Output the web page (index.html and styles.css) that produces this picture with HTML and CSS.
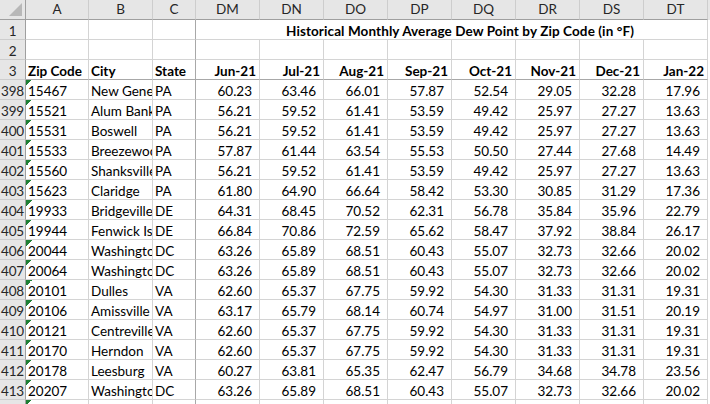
FILE: index.html
```html
<!DOCTYPE html>
<html>
<head>
<meta charset="utf-8">
<link rel="stylesheet" href="styles.css">
</head>
<body>
<div class="sheet">
  <div class="row colhdr">
    <div class="corner"><div class="tri"></div></div>
    <div class="ch">A</div><div class="ch">B</div><div class="ch">C</div>
    <div class="ch">DM</div><div class="ch">DN</div><div class="ch">DO</div><div class="ch">DP</div>
    <div class="ch">DQ</div><div class="ch">DR</div><div class="ch">DS</div><div class="ch">DT</div>
  </div>
  <div class="row">
    <div class="rn">1</div><div class="c"></div><div class="c"></div><div class="c fz"></div>
    <div class="c title">Historical Monthly Average Dew Point by Zip Code (in °F)</div>
  </div>
  <div class="row">
    <div class="rn">2</div><div class="c"></div><div class="c"></div><div class="c fz"></div>
    <div class="c"></div><div class="c"></div><div class="c"></div><div class="c"></div>
    <div class="c"></div><div class="c"></div><div class="c"></div><div class="c"></div>
  </div>
  <div class="row frozen">
    <div class="rn">3</div>
    <div class="c b">Zip Code</div><div class="c b">City</div><div class="c b fz">State</div>
    <div class="c b r">Jun-21</div><div class="c b r">Jul-21</div><div class="c b r">Aug-21</div><div class="c b r">Sep-21</div>
    <div class="c b r">Oct-21</div><div class="c b r">Nov-21</div><div class="c b r">Dec-21</div><div class="c b r">Jan-22</div>
  </div>
  <div class="row"><div class="rn">398</div><div class="c z">15467</div><div class="c">New Geneva</div><div class="c fz">PA</div><div class="c n">60.23</div><div class="c n">63.46</div><div class="c n">66.01</div><div class="c n">57.87</div><div class="c n">52.54</div><div class="c n">29.05</div><div class="c n">32.28</div><div class="c n">17.96</div></div>
  <div class="row"><div class="rn">399</div><div class="c z">15521</div><div class="c">Alum Bank</div><div class="c fz">PA</div><div class="c n">56.21</div><div class="c n">59.52</div><div class="c n">61.41</div><div class="c n">53.59</div><div class="c n">49.42</div><div class="c n">25.97</div><div class="c n">27.27</div><div class="c n">13.63</div></div>
  <div class="row"><div class="rn">400</div><div class="c z">15531</div><div class="c">Boswell</div><div class="c fz">PA</div><div class="c n">56.21</div><div class="c n">59.52</div><div class="c n">61.41</div><div class="c n">53.59</div><div class="c n">49.42</div><div class="c n">25.97</div><div class="c n">27.27</div><div class="c n">13.63</div></div>
  <div class="row"><div class="rn">401</div><div class="c z">15533</div><div class="c">Breezewood</div><div class="c fz">PA</div><div class="c n">57.87</div><div class="c n">61.44</div><div class="c n">63.54</div><div class="c n">55.53</div><div class="c n">50.50</div><div class="c n">27.44</div><div class="c n">27.68</div><div class="c n">14.49</div></div>
  <div class="row"><div class="rn">402</div><div class="c z">15560</div><div class="c">Shanksville</div><div class="c fz">PA</div><div class="c n">56.21</div><div class="c n">59.52</div><div class="c n">61.41</div><div class="c n">53.59</div><div class="c n">49.42</div><div class="c n">25.97</div><div class="c n">27.27</div><div class="c n">13.63</div></div>
  <div class="row"><div class="rn">403</div><div class="c z">15623</div><div class="c">Claridge</div><div class="c fz">PA</div><div class="c n">61.80</div><div class="c n">64.90</div><div class="c n">66.64</div><div class="c n">58.42</div><div class="c n">53.30</div><div class="c n">30.85</div><div class="c n">31.29</div><div class="c n">17.36</div></div>
  <div class="row"><div class="rn">404</div><div class="c z">19933</div><div class="c">Bridgeville</div><div class="c fz">DE</div><div class="c n">64.31</div><div class="c n">68.45</div><div class="c n">70.52</div><div class="c n">62.31</div><div class="c n">56.78</div><div class="c n">35.84</div><div class="c n">35.96</div><div class="c n">22.79</div></div>
  <div class="row"><div class="rn">405</div><div class="c z">19944</div><div class="c">Fenwick Island</div><div class="c fz">DE</div><div class="c n">66.84</div><div class="c n">70.86</div><div class="c n">72.59</div><div class="c n">65.62</div><div class="c n">58.47</div><div class="c n">37.92</div><div class="c n">38.84</div><div class="c n">26.17</div></div>
  <div class="row"><div class="rn">406</div><div class="c z">20044</div><div class="c">Washington</div><div class="c fz">DC</div><div class="c n">63.26</div><div class="c n">65.89</div><div class="c n">68.51</div><div class="c n">60.43</div><div class="c n">55.07</div><div class="c n">32.73</div><div class="c n">32.66</div><div class="c n">20.02</div></div>
  <div class="row"><div class="rn">407</div><div class="c z">20064</div><div class="c">Washington</div><div class="c fz">DC</div><div class="c n">63.26</div><div class="c n">65.89</div><div class="c n">68.51</div><div class="c n">60.43</div><div class="c n">55.07</div><div class="c n">32.73</div><div class="c n">32.66</div><div class="c n">20.02</div></div>
  <div class="row"><div class="rn">408</div><div class="c z">20101</div><div class="c">Dulles</div><div class="c fz">VA</div><div class="c n">62.60</div><div class="c n">65.37</div><div class="c n">67.75</div><div class="c n">59.92</div><div class="c n">54.30</div><div class="c n">31.33</div><div class="c n">31.31</div><div class="c n">19.31</div></div>
  <div class="row"><div class="rn">409</div><div class="c z">20106</div><div class="c">Amissville</div><div class="c fz">VA</div><div class="c n">63.17</div><div class="c n">65.79</div><div class="c n">68.14</div><div class="c n">60.74</div><div class="c n">54.97</div><div class="c n">31.00</div><div class="c n">31.51</div><div class="c n">20.19</div></div>
  <div class="row"><div class="rn">410</div><div class="c z">20121</div><div class="c">Centreville</div><div class="c fz">VA</div><div class="c n">62.60</div><div class="c n">65.37</div><div class="c n">67.75</div><div class="c n">59.92</div><div class="c n">54.30</div><div class="c n">31.33</div><div class="c n">31.31</div><div class="c n">19.31</div></div>
  <div class="row"><div class="rn">411</div><div class="c z">20170</div><div class="c">Herndon</div><div class="c fz">VA</div><div class="c n">62.60</div><div class="c n">65.37</div><div class="c n">67.75</div><div class="c n">59.92</div><div class="c n">54.30</div><div class="c n">31.33</div><div class="c n">31.31</div><div class="c n">19.31</div></div>
  <div class="row"><div class="rn">412</div><div class="c z">20178</div><div class="c">Leesburg</div><div class="c fz">VA</div><div class="c n">60.27</div><div class="c n">63.81</div><div class="c n">65.35</div><div class="c n">62.47</div><div class="c n">56.79</div><div class="c n">34.68</div><div class="c n">34.78</div><div class="c n">23.56</div></div>
  <div class="row"><div class="rn">413</div><div class="c z">20207</div><div class="c">Washington</div><div class="c fz">DC</div><div class="c n">63.26</div><div class="c n">65.89</div><div class="c n">68.51</div><div class="c n">60.43</div><div class="c n">55.07</div><div class="c n">32.73</div><div class="c n">32.66</div><div class="c n">20.02</div></div>
  <div class="row"><div class="rn">414</div><div class="c z">20210</div><div class="c">Washington</div><div class="c fz">DC</div><div class="c n">63.26</div><div class="c n">65.89</div><div class="c n">68.51</div><div class="c n">60.43</div><div class="c n">55.07</div><div class="c n">32.73</div><div class="c n">32.66</div><div class="c n">20.02</div></div>
</div>
</body>
</html>
```

FILE: styles.css
```css
html, body {
  margin: 0;
  padding: 0;
  background: #ffffff;
}
body {
  width: 710px;
  height: 404px;
  overflow: hidden;
  font-family: Lato, "Open Sans", sans-serif;
  font-size: 13.5px;
  color: #000;
}
.sheet {
  display: flex;
  flex-direction: column;
  width: 710px;
}
.row {
  display: grid;
  grid-template-columns: 26px 63px 64px 43px repeat(8, 64px) 2px;
  height: 20px;
  flex: none;
}
.row > div {
  box-sizing: border-box;
  height: 20px;
  border-right: 1px solid #d4d4d4;
  border-bottom: 1px solid #d4d4d4;
  overflow: hidden;
  white-space: nowrap;
}
.colhdr {
  background: #e6e6e6;
}
.colhdr > div {
  border-right: 1px solid #cdcdcd;
  border-bottom: 1px solid #9f9f9f;
}
.ch {
  text-align: center;
  line-height: 19px;
  color: #262626;
}
.corner {
  display: flex;
  justify-content: flex-end;
  align-items: flex-end;
  padding: 0 3px 3px 0;
  border-right-color: #9f9f9f !important;
}
.tri {
  width: 13px;
  height: 13px;
  background: #b8b8b8;
  clip-path: polygon(100% 0, 100% 100%, 0 100%);
}
.rn {
  background: #e6e6e6;
  border-right-color: #9f9f9f !important;
  border-bottom-color: #cdcdcd !important;
  text-align: center;
  line-height: 16px;
  padding-top: 3px;
  color: #262626;
  letter-spacing: -0.2px;
}
.c {
  line-height: 16px;
  padding: 3px 0 0 2px;
}
.fz {
  border-right-color: #a8a8a8 !important;
}
.frozen > div {
  border-bottom-color: #a8a8a8;
}
.frozen > .rn {
  border-bottom-color: #cdcdcd !important;
}
.title {
  grid-column: 5 / 13;
  font-weight: bold;
  text-align: center;
  padding-left: 17px;
  letter-spacing: 0.1px;
}
.b {
  font-weight: bold;
}
.r {
  text-align: right;
  padding-right: 3px;
}
.n {
  text-align: right;
  padding-right: 7px;
}
.z {
  background: linear-gradient(135deg, #1e7f34 50%, transparent 50%) top left / 6px 6px no-repeat;
}
```
